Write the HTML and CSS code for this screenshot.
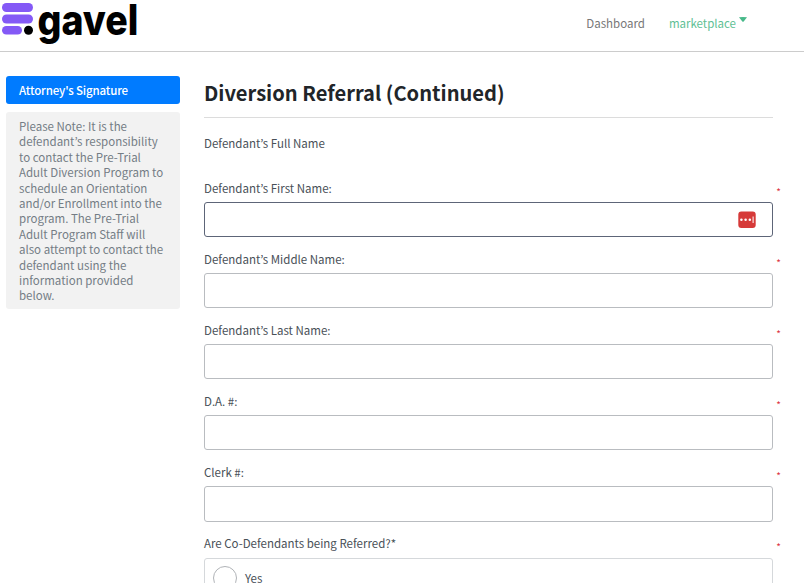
FILE: index.html
```html
<!DOCTYPE html>
<html lang="en">
<head>
<meta charset="utf-8">
<title>Diversion Referral</title>
<link rel="stylesheet" href="styles.css">
</head>
<body>
<header class="topbar">
  <svg class="logo" width="145" height="50" viewBox="0 0 145 50" role="img" aria-label="gavel">
    <g fill="#8459f6">
      <rect x="2" y="3" width="31" height="9" rx="4.5"/>
      <rect x="2" y="14.5" width="31" height="9" rx="4.5"/>
      <rect x="2" y="26" width="20" height="8.5" rx="4.25"/>
    </g>
    <circle cx="28.5" cy="30.2" r="4.5"/>
    <text class="wordmark" x="37.5" y="34.5" textLength="101" lengthAdjust="spacingAndGlyphs">gavel</text>
  </svg>
  <nav class="nav">
    <a class="nav-link">Dashboard</a>
    <a class="nav-link user">marketplace<svg class="caret" width="8" height="5" viewBox="0 0 8 5"><path d="M0 .3Q4 -.3 8 .3L4.7 4.5Q4 5.2 3.3 4.5Z" fill="#48b98a"/></svg></a>
  </nav>
</header>
<div class="page">
  <aside class="sidebar">
    <a class="step active">Attorney's Signature</a>
    <div class="note">Please Note: It is the<br>defendant’s responsibility<br>to contact the Pre-Trial<br>Adult Diversion Program to<br>schedule an Orientation<br>and/or Enrollment into the<br>program. The Pre-Trial<br>Adult Program Staff will<br>also attempt to contact the<br>defendant using the<br>information provided<br>below.</div>
  </aside>
  <main class="form">
    <h1 class="title">Diversion Referral (Continued)</h1>
    <p class="subhead">Defendant’s Full Name</p>
    <div class="field">
      <div class="label"><span>Defendant’s First Name:</span><span class="req">*</span></div>
      <div class="input focused"><svg width="18" height="18" viewBox="0 0 18 18"><rect x=".3" y=".5" width="17.4" height="16.5" rx="3" fill="#d63a39"/><g fill="#fff"><circle cx="3.4" cy="8.7" r="1.25"/><circle cx="7.6" cy="8.7" r="1.25"/><circle cx="11.8" cy="8.7" r="1.25"/><rect x="14.6" y="5.5" width="1" height="6.5"/></g></svg></div>
    </div>
    <div class="field">
      <div class="label"><span>Defendant’s Middle Name:</span><span class="req">*</span></div>
      <div class="input"></div>
    </div>
    <div class="field">
      <div class="label"><span>Defendant’s Last Name:</span><span class="req">*</span></div>
      <div class="input"></div>
    </div>
    <div class="field">
      <div class="label"><span>D.A. #:</span><span class="req">*</span></div>
      <div class="input"></div>
    </div>
    <div class="field">
      <div class="label"><span>Clerk #:</span><span class="req">*</span></div>
      <div class="input tall"></div>
    </div>
    <div class="field last">
      <div class="label"><span>Are Co-Defendants being Referred?*</span><span class="req">*</span></div>
      <div class="choice"><span class="radio"></span><span>Yes</span></div>
    </div>
  </main>
</div>
</body>
</html>
```

FILE: styles.css
```css
* { box-sizing: border-box; }
html, body { height: 100%; }
body {
  margin: 0;
  overflow: hidden;
  background: #fff;
  color: #495057;
  font: 11.5px/16px "Noto Sans CJK KR", "Noto Sans", sans-serif;
}
.topbar {
  display: flex;
  justify-content: space-between;
  height: 52px;
  padding-right: 57px;
  border-bottom: 1px solid #ccc;
}
.wordmark { font: 800 42.5px Inter, sans-serif; fill: #000; }
.nav { display: flex; gap: 24px; padding-top: 15px; }
.nav-link { color: #777; }
.nav-link.user { display: flex; gap: 3px; color: #5fbf95; }
.caret { margin-top: 2px; }
.page { display: flex; gap: 24px; padding: 24px 31px 0 6px; }
.sidebar { flex: none; width: 174px; }
.step {
  display: block;
  height: 28px;
  padding: 6px 13px;
  border-radius: 3px;
}
.step.active { background: #007bff; color: #fff; font-weight: 500; letter-spacing: -0.15px; }
.note {
  height: 197px;
  margin-top: 8px;
  padding: 7px 13px;
  border-radius: 3px;
  background: #f2f2f2;
  color: #747d85;
  line-height: 15.4px;
  white-space: nowrap;
}
.form { flex: 1; }
.title {
  height: 42px;
  margin: 0;
  border-bottom: 1px solid #dcdcdc;
  color: #212529;
  font-size: 20.1px;
  line-height: 33px;
}
.subhead { margin: 17px 0 29px; }
.field { height: 71px; }
.label { display: flex; justify-content: space-between; height: 22px; margin-right: -8px; }
.req { color: #dc3545; font-size: 10px; line-height: 24px; }
.input {
  display: flex;
  align-items: center;
  justify-content: flex-end;
  height: 35px;
  padding-right: 16px;
  border: 1px solid #b9bcc0;
  border-radius: 3px;
}
.input.focused { border-color: #5d6578; }
.input.tall { height: 36px; }
.field.last .label { height: 23px; }
.choice {
  display: flex;
  gap: 8px;
  height: 40px;
  padding: 7px 8px;
  border: 1px solid #d5d8db;
  border-radius: 3px 3px 0 0;
  line-height: 25px;
}
.radio { width: 24px; height: 24px; border: 1px solid #b0b3b7; border-radius: 50%; }
```
